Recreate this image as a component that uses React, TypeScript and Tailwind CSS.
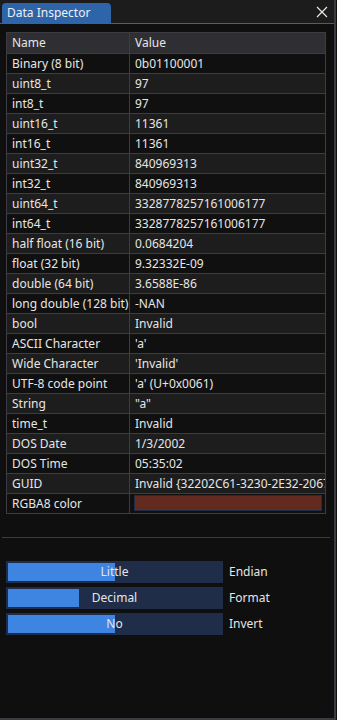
import React from "react";

const rows: [string, string][] = [
  ["Binary (8 bit)", "0b01100001"],
  ["uint8_t", "97"],
  ["int8_t", "97"],
  ["uint16_t", "11361"],
  ["int16_t", "11361"],
  ["uint32_t", "840969313"],
  ["int32_t", "840969313"],
  ["uint64_t", "3328778257161006177"],
  ["int64_t", "3328778257161006177"],
  ["half float (16 bit)", "0.0684204"],
  ["float (32 bit)", "9.32332E-09"],
  ["double (64 bit)", "3.6588E-86"],
  ["long double (128 bit)", "-NAN"],
  ["bool", "Invalid"],
  ["ASCII Character", "'a'"],
  ["Wide Character", "'Invalid'"],
  ["UTF-8 code point", "'a' (U+0x0061)"],
  ["String", "\"a\""],
  ["time_t", "Invalid"],
  ["DOS Date", "1/3/2002"],
  ["DOS Time", "05:35:02"],
  ["GUID", "Invalid {32202C61-3230-2E32-2067-000000000000}"],
];

function Slider({ text, fill, label }: { text: string; fill: number; label: string }) {
  return (
    <div className="flex items-center h-[22px]">
      <div className="relative w-[217px] h-[22px] bg-[#1f2d48] flex items-center justify-center">
        <div className="absolute left-[2px] top-[2px] bottom-[2px] bg-[#3d85e0]" style={{ width: fill }} />
        <span className="relative text-[#e6e6e6]">{text}</span>
      </div>
      <span className="ml-[6px] text-[#e6e6e6]">{label}</span>
    </div>
  );
}

export default function App() {
  return (
    <div
      className="w-[337px] h-[720px] bg-[#0f0f0f] text-[12px] leading-[20px] text-[#e6e6e6] overflow-hidden"
      style={{ fontFamily: '"Noto Sans", "Open Sans", sans-serif' }}
    >
      <div className="w-[336px] h-[720px] border-r-2 border-b-2 border-[#3a3a40] flex flex-col">
        <div className="h-[24px] bg-[#1c1c1c] border-b border-[#2e64aa] flex items-end pl-[2px] justify-between">
          <div className="h-[20px] w-[109px] bg-[#2e64aa] rounded-t-[4px] pl-[5px] leading-[20px] text-[#f0f0f0]">
            Data Inspector
          </div>
          <svg width="12" height="12" viewBox="0 0 12 12" className="mb-[5px] mr-[6px]">
            <path d="M1 1 L11 11 M11 1 L1 11" stroke="#e8e8e8" strokeWidth="1.2" />
          </svg>
        </div>
        <div className="pt-[8px] pl-[6px]">
          <div className="w-[320px] border border-[#3c3c42]">
            <div className="flex h-[20px] bg-[#2f2f33]">
              <div className="w-[123px] pl-[5px] border-r border-[#3c3c42]">Name</div>
              <div className="flex-1 pl-[5px]">Value</div>
            </div>
            {rows.map(([n, v], i) => (
              <div
                key={n}
                className={`flex h-[20px] border-t border-[#3c3c42] ${i % 2 === 0 ? "bg-[#101010]" : "bg-[#1d1d1d]"}`}
              >
                <div className="w-[123px] pl-[5px] border-r border-[#3c3c42] whitespace-nowrap overflow-hidden leading-[19px]">{n}</div>
                <div className="flex-1 pl-[5px] whitespace-nowrap overflow-hidden leading-[19px]">{v}</div>
              </div>
            ))}
            <div className="flex h-[20px] border-t border-[#3c3c42] bg-[#101010]">
              <div className="w-[123px] pl-[5px] border-r border-[#3c3c42] leading-[19px]">RGBA8 color</div>
              <div className="flex-1 pl-[4px] pr-[3px] pt-[1px]">
                <div className="h-[16px] bg-[#632a20] border border-[#1f2d48]" />
              </div>
            </div>
          </div>
        </div>
        <div className="mt-[23px] ml-[2px] w-[328px] h-px bg-[#3a3a42]" />
        <div className="mt-[23px] pl-[6px] flex flex-col gap-[4px]">
          <Slider text="Little" fill={107} label="Endian" />
          <Slider text="Decimal" fill={71} label="Format" />
          <Slider text="No" fill={107} label="Invert" />
        </div>
      </div>
    </div>
  );
}
